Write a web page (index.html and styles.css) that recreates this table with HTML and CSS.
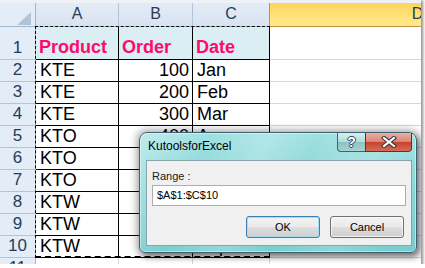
FILE: index.html
```html
<!DOCTYPE html>
<html>
<head>
<meta charset="utf-8">
<title>Sheet</title>
<link rel="stylesheet" href="styles.css">
</head>
<body>
<div class="frame">
  <div class="strip"></div>
  <div class="grid">
    <div class="corner"><span class="tri"></span></div>
    <div class="ch">A</div><div class="ch">B</div><div class="ch ch-c">C</div><div class="ch active">D</div>

    <div class="rh">1</div><div class="c hdr">Product</div><div class="c hdr">Order</div><div class="c hdr">Date</div><div class="d"></div>
    <div class="rh">2</div><div class="c">KTE</div><div class="c num">100</div><div class="c">Jan</div><div class="d"></div>
    <div class="rh">3</div><div class="c">KTE</div><div class="c num">200</div><div class="c">Feb</div><div class="d"></div>
    <div class="rh">4</div><div class="c">KTE</div><div class="c num">300</div><div class="c">Mar</div><div class="d"></div>
    <div class="rh">5</div><div class="c">KTO</div><div class="c num">400</div><div class="c">Apr</div><div class="d"></div>
    <div class="rh">6</div><div class="c">KTO</div><div class="c num">500</div><div class="c">May</div><div class="d"></div>
    <div class="rh">7</div><div class="c">KTO</div><div class="c num">600</div><div class="c">Jun</div><div class="d"></div>
    <div class="rh">8</div><div class="c">KTW</div><div class="c num">700</div><div class="c">Jul</div><div class="d"></div>
    <div class="rh">9</div><div class="c">KTW</div><div class="c num">800</div><div class="c">Aug</div><div class="d"></div>
    <div class="rh">10</div><div class="c">KTW</div><div class="c num">900</div><div class="c">Sep</div><div class="d"></div>
    <div class="rh">11</div><div class="e"></div><div class="e"></div><div class="e"></div><div class="e"></div>
  </div>

  <div class="marquee"></div>

  <div class="dialog">
    <div class="titlebar">
      <span class="title">KutoolsforExcel</span>
      <div class="tbtns">
        <span class="tb help">?</span>
        <span class="tb close">
          <svg width="16" height="12" viewBox="0 0 16 12">
            <path d="M3 2 L13 10 M13 2 L3 10" stroke="#3b3b3b" stroke-width="4.2" stroke-linecap="square" fill="none"/>
            <path d="M3 2 L13 10 M13 2 L3 10" stroke="#ffffff" stroke-width="2" stroke-linecap="square" fill="none"/>
          </svg>
        </span>
      </div>
    </div>
    <div class="panel">
      <div class="label">Range :</div>
      <div class="input">$A$1:$C$10</div>
      <div class="buttons">
        <span class="btn default">OK</span>
        <span class="btn">Cancel</span>
      </div>
    </div>
  </div>
</div>
</body>
</html>
```

FILE: styles.css
```css
html, body {
  margin: 0;
  padding: 0;
  background: #ffffff;
}

.frame {
  position: relative;
  width: 421px;
  height: 264px;
  overflow: hidden;
  background: #ffffff;
  box-shadow: 1px 1px 3px 1px rgba(0, 0, 0, 0.45);
  font-family: "Liberation Sans", Arial, sans-serif;
}

.strip {
  height: 3px;
  background: #eef2f7;
}

.grid {
  display: grid;
  grid-template-columns: 36px 83px 74px 77px 296px;
  grid-template-rows: 24px 33px repeat(10, 22px);
  width: 566px;
}

.grid > div {
  box-sizing: border-box;
  border-right: 1px solid #d0d7e5;
  border-bottom: 1px solid #d0d7e5;
  overflow: hidden;
  white-space: nowrap;
}

.corner {
  position: relative;
  background: #e4ecf7;
  border-right-color: #9eb6ce !important;
  border-bottom-color: #9eb6ce !important;
}

.tri {
  position: absolute;
  left: 17px;
  top: 9px;
  width: 14px;
  height: 13px;
  background: #b2c3d6;
  clip-path: polygon(100% 0, 100% 100%, 0 100%);
}

.ch {
  background: linear-gradient(#e3ebf6, #d9e3f0);
  border-right-color: #b1c4db !important;
  border-bottom-color: #9eb6ce !important;
  color: #263d5a;
  font-size: 16px;
  line-height: 20px;
  display: flex;
  align-items: flex-end;
  justify-content: center;
  padding-bottom: 2px;
}

.ch-c {
  border-right-color: #c4923c !important;
}

.ch.active {
  background: linear-gradient(#fdd35a, #ffe27a 55%, #ffe98c);
  border-bottom-color: #c4923c !important;
}

.rh {
  background: #e4ecf7;
  border-right-color: #9eb6ce !important;
  border-bottom-color: #b1c4db !important;
  color: #263d5a;
  font-size: 17px;
  line-height: 22px;
  display: flex;
  align-items: flex-end;
  justify-content: center;
}

.c {
  border-right-color: #000000 !important;
  border-bottom-color: #000000 !important;
  font-size: 18px;
  line-height: 22px;
  color: #000000;
  padding: 0 3px 0 4px;
  display: flex;
  align-items: flex-end;
}

.c.hdr {
  background: #daeef3;
  color: #ff0a6c;
  font-weight: bold;
  padding-bottom: 1px;
  padding-left: 3px;
}

.c.num {
  justify-content: flex-end;
}

.d, .e {
  background: #ffffff;
}

.marquee {
  position: absolute;
  left: 35px;
  top: 26px;
  width: 235px;
  height: 232px;
  box-sizing: border-box;
  border: 1px dashed #000000;
  border-bottom-width: 2px;
  pointer-events: none;
}

/* Dialog */
.dialog {
  position: absolute;
  left: 139px;
  top: 132px;
  width: 278px;
  height: 121px;
  box-sizing: border-box;
  border: 1px solid #3e6070;
  border-radius: 8px 8px 6px 6px;
  background:
    linear-gradient(112deg, rgba(255,255,255,0.35) 0%, rgba(255,255,255,0) 22%, rgba(255,255,255,0.22) 40%, rgba(255,255,255,0) 55%, rgba(255,255,255,0.18) 75%, rgba(255,255,255,0) 90%),
    linear-gradient(#9fe0e1, #84d5d6 60%, #78cdce);
  box-shadow: 0 0 7px 3px rgba(0, 0, 0, 0.28), 3px 4px 6px rgba(0, 0, 0, 0.4), inset 0 0 0 1px rgba(255, 255, 255, 0.45);
  display: flex;
  flex-direction: column;
  padding: 0 4px 6px 6px;
  font-family: "Liberation Sans", Arial, sans-serif;
}

.titlebar {
  height: 27px;
  display: flex;
  align-items: flex-start;
}

.title {
  margin-top: 6px;
  margin-left: 2px;
  font-size: 12px;
  line-height: 14px;
  color: #000000;
}

.tbtns {
  margin-left: auto;
  display: flex;
}

.tb {
  box-sizing: border-box;
  height: 19px;
  display: flex;
  align-items: center;
  justify-content: center;
  border: 1px solid #48606a;
  border-top: none;
}

.help {
  width: 28px;
  border-right: none;
  border-radius: 0 0 0 4px;
  background: linear-gradient(#d6efef, #b4dcdc 48%, #8fc0c2 52%, #a6d3d4);
  color: #ffffff;
  font-weight: bold;
  font-size: 14px;
  line-height: 14px;
  text-shadow: -1px 0 #34454f, 1px 0 #34454f, 0 -1px #34454f, 0 1px #34454f;
}

.close {
  width: 47px;
  border-radius: 0 0 4px 0;
  border-color: #5a3430;
  background: linear-gradient(#eab1a6, #d98474 48%, #c5432f 52%, #d66c58);
}

.close svg {
  display: block;
}

.panel {
  flex: 1;
  box-sizing: border-box;
  background: #f0f0f0;
  border: 1px solid #8aa3ab;
  padding: 9px 5px 0 5px;
  display: flex;
  flex-direction: column;
  font-size: 11px;
  color: #1a1a1a;
}

.label {
  line-height: 13px;
}

.input {
  margin-top: 2px;
  height: 21px;
  box-sizing: border-box;
  border: 1px solid #abadb3;
  background: #ffffff;
  padding-left: 4px;
  line-height: 19px;
  color: #000000;
}

.buttons {
  margin-top: 10px;
  display: flex;
  justify-content: flex-end;
  gap: 10px;
  padding-right: 2px;
}

.btn {
  box-sizing: border-box;
  width: 74px;
  height: 22px;
  border: 1px solid #707070;
  border-radius: 3px;
  background: linear-gradient(#f2f2f2, #ebebeb 48%, #dddddd 52%, #cfcfcf);
  box-shadow: inset 0 0 0 1px rgba(255, 255, 255, 0.7);
  display: flex;
  align-items: center;
  justify-content: center;
  color: #000000;
}

.btn.default {
  border-color: #3c7fb1;
  box-shadow: inset 0 0 0 1px #a8dcf4;
  background: linear-gradient(#f2f2f2, #ebebeb 48%, #dddddd 52%, #cfcfcf);
}
```
